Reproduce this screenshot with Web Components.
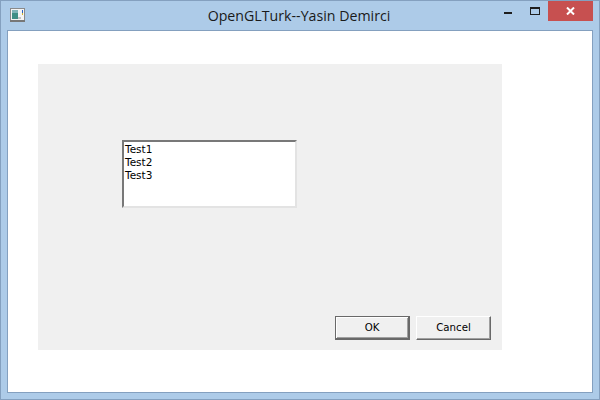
<!DOCTYPE html>
<html>
<head>
<meta charset="utf-8">
<title>OpenGLTurk</title>
<style>
  html, body { margin: 0; height: 100%; }
  body { font-family: "DejaVu Sans", sans-serif; }
</style>
</head>
<body>
<win-frame caption="OpenGLTurk--Yasin Demirci">
  <dlg-panel>
    <list-box items="Test1,Test2,Test3"></list-box>
    <win-button slot="buttons" default>OK</win-button>
    <win-button slot="buttons">Cancel</win-button>
  </dlg-panel>
</win-frame>

<script>
// window with title bar and border
customElements.define("win-frame", class extends HTMLElement {
  connectedCallback() {
    this.attachShadow({mode: "open"});
    this.shadowRoot.innerHTML = `
    <style>
      :host { display: flex; flex-direction: column; width: 600px; height: 400px; box-sizing: border-box;
        background: #adcbe8; border: 1px solid #84a0bf; overflow: hidden; }
      .bar { display: flex; align-items: flex-start; height: 29px; flex: none; position: relative; }
      .icon { margin: 7px 0 0 9px; width: 16px; height: 15px; flex: none; display: block; }
      .caption { position: absolute; left: 0; right: 0; top: 5px; text-align: center;
        font: 14.2px/20px "Open Sans", sans-serif; color: #1a1a1a; padding-right: 2px; }
      .ctrls { margin-left: auto; display: flex; margin-right: 6px; }
      .ctrl { width: 26px; height: 20px; display: flex; align-items: center; justify-content: center; }
      .close { width: 45px; height: 20px; background: #c75050; display: flex; align-items: center; justify-content: center; }
      .client { flex: 1; margin: 0 6px 6px; background: #fff; border: 1px solid #84a0bf; padding: 33px 90px 42px 30px;
        display: flex; min-height: 0; }
    </style>
    <div class="bar">
      <svg class="icon" viewBox="0 0 16 15">
        <rect x="0.5" y="0.5" width="14" height="12" fill="#f4f4f4" stroke="#8a8a8a"/>
        <rect x="0" y="12" width="15" height="2" fill="#777"/>
        <rect x="2" y="2" width="6" height="9" fill="#3f8f86"/>
        <rect x="2" y="2" width="6" height="3" fill="#7fb4b8"/>
        <rect x="12" y="2" width="1" height="3" fill="#2a63c4"/>
        <rect x="12" y="5" width="1" height="2" fill="#d2b32a"/>
        <rect x="8" y="9" width="3" height="2" fill="#c4c4c4"/>
      </svg>
      <div class="caption">${this.getAttribute("caption")}</div>
      <div class="ctrls">
        <div class="ctrl" style="padding-top:2px"><svg width="10" height="4"><rect y="1" width="8" height="2" fill="#1e1e1e"/></svg></div>
        <div class="ctrl"><svg width="11" height="9"><rect x="0.5" y="0.5" width="9" height="7" fill="none" stroke="#1e1e1e"/><rect width="10" height="2" fill="#1e1e1e"/></svg></div>
        <div class="close"><svg width="9" height="8" viewBox="0 0 9 8"><path d="M1 0.5 L8 7.5 M8 0.5 L1 7.5" stroke="#fff" stroke-width="2" fill="none"/></svg></div>
      </div>
    </div>
    <div class="client"><slot></slot></div>
    `;
  }
});

// gray dialog area
customElements.define("dlg-panel", class extends HTMLElement {
  connectedCallback() {
    this.attachShadow({mode: "open"});
    this.shadowRoot.innerHTML = `
    <style>
      :host { display: flex; flex-direction: column; flex: 1; background: #f0f0f0; box-sizing: border-box;
        padding: 76px 11px 10px 84px; }
      .top { flex: 1; }
      .btns { display: flex; justify-content: flex-end; gap: 6px; }
    </style>
    <div class="top"><slot></slot></div>
    <div class="btns"><slot name="buttons"></slot></div>
    `;
  }
});

customElements.define("list-box", class extends HTMLElement {
  connectedCallback() {
    this.attachShadow({mode: "open"});
    const rows = this.getAttribute("items").split(",").map(t => `<div>${t}</div>`).join("");
    this.shadowRoot.innerHTML = `
    <style>
      :host { display: block; width: 175px; height: 68px; box-sizing: border-box; background: #fff;
        border: 2px solid; border-color: #787878 #e3e3e3 #e3e3e3 #787878; padding: 1px 1px;
        font: 10.5px/13px "DejaVu Sans", sans-serif; color: #000; }
    </style>
    ${rows}
    `;
  }
});

customElements.define("win-button", class extends HTMLElement {
  connectedCallback() {
    this.attachShadow({mode: "open"});
    const isDefault = this.hasAttribute("default");
    const box = isDefault
      ? "border: 1px solid #696969; border-width: 1px 2px 2px 1px; box-shadow: inset 1px 1px 0 #fff, inset -1px -1px 0 #a0a0a0;"
      : "border: 1px solid; border-color: #fff #696969 #696969 #fff; box-shadow: inset -1px -1px 0 #a0a0a0; padding-bottom: 2px;";
    this.shadowRoot.innerHTML = `
    <style>
      :host { display: flex; align-items: center; justify-content: center; width: 75px; height: 24px;
        box-sizing: border-box; background: #f0f0f0; ${box} font: 10.2px "DejaVu Sans", sans-serif; color: #000; }
    </style>
    <slot></slot>
    `;
  }
});
</script>
</body>
</html>
